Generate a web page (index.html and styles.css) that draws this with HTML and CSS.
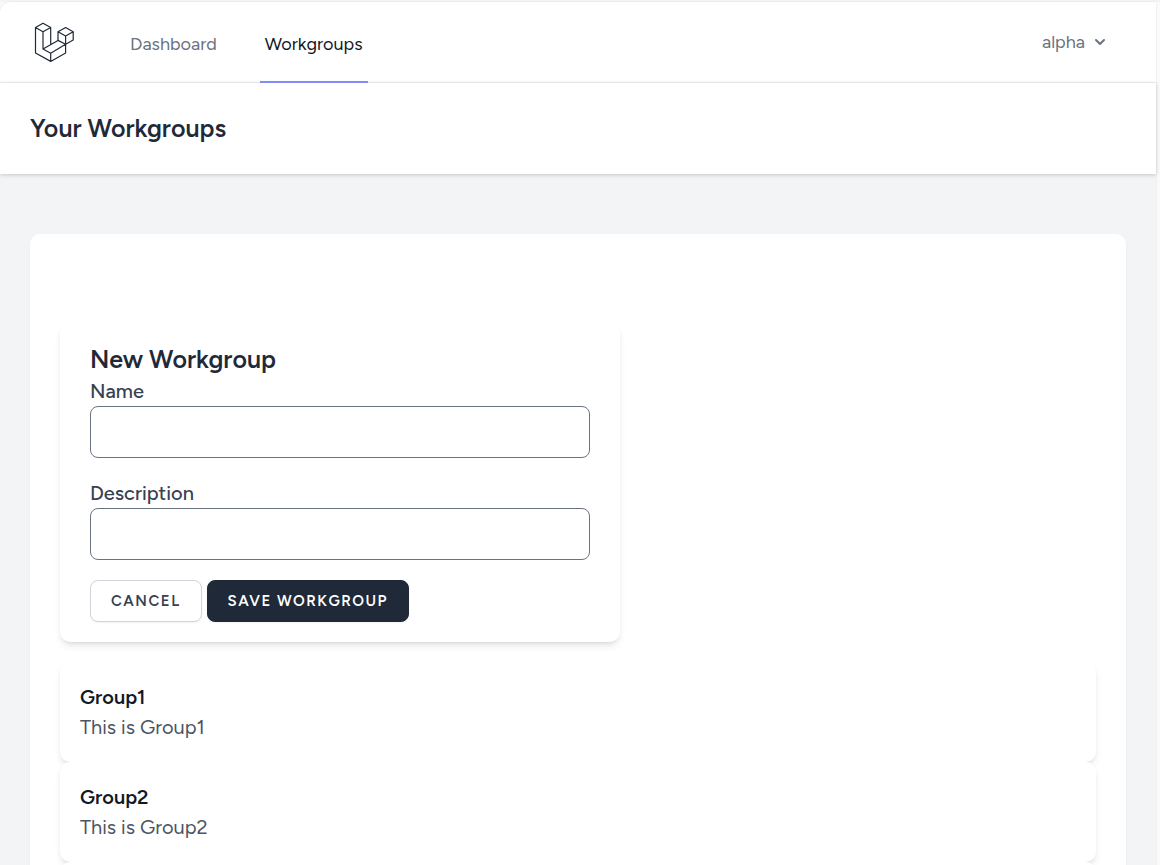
FILE: index.html
```html
<!DOCTYPE html>
<html lang="en">
<head>
<meta charset="utf-8">
<meta name="viewport" content="width=device-width, initial-scale=1">
<title>Workgroups</title>
<link rel="stylesheet" href="styles.css">
</head>
<body>
<div class="frame">
  <div class="app">
    <nav class="nav">
      <a class="logo" href="#" aria-label="Home">
        <svg viewBox="0 0 40 40" width="40" height="40" fill="none" stroke="currentColor" stroke-width="1.2" stroke-linejoin="round" aria-hidden="true">
          <path d="M1.5 5.5 9 1.2 16.7 5.5 9 9.8ZM1.5 5.5V31L16.7 39.4 31.6 31V22.3M9 9.8V27L16.7 31.2V39.4M16.7 5.5V22.5M9 27 24 18.4 31.6 22.3 16.7 31.2"/>
          <path d="M24 9.8 31.6 5.5 39.2 9.8 31.6 14ZM24 9.8V18.4M39.2 9.8V18L31.6 22.3V14"/>
        </svg>
      </a>
      <a class="nav-link" href="#">Dashboard</a>
      <a class="nav-link active" href="#" aria-current="page">Workgroups</a>
      <button class="user" type="button">alpha
        <svg viewBox="0 0 20 20" width="20" height="20" fill="currentColor" aria-hidden="true"><path fill-rule="evenodd" d="M5.293 7.293a1 1 0 011.414 0L10 10.586l3.293-3.293a1 1 0 111.414 1.414l-4 4a1 1 0 01-1.414 0l-4-4a1 1 0 010-1.414z"/></svg>
      </button>
    </nav>
    <header class="header"><h1 class="title">Your Workgroups</h1></header>
    <main class="main">
      <div class="panel">
        <form class="form">
          <h2 class="title form-title">New Workgroup</h2>
          <label class="label" for="name">Name</label>
          <input class="input" id="name" type="text">
          <label class="label" for="description">Description</label>
          <input class="input" id="description" type="text">
          <div class="actions">
            <button class="button" type="button">Cancel</button>
            <button class="button primary" type="submit">Save Workgroup</button>
          </div>
        </form>
        <section class="group"><h3 class="group-name">Group1</h3><p class="group-text">This is Group1</p></section>
        <section class="group"><h3 class="group-name">Group2</h3><p class="group-text">This is Group2</p></section>
        <section class="group"></section>
      </div>
    </main>
  </div>
</div>
</body>
</html>
```
FILE: styles.css
```css
* { box-sizing: border-box; }
html { overflow: hidden; }
body { margin: 0; height: 100vh; overflow: hidden; background: #fafafb; font-family: Figtree, Lato, sans-serif; color: #111827; }
h1, h2, h3, p { margin: 0; }
.frame { padding: 2px 4px 0 0; background: linear-gradient(#f3f4f6 2px, #fafafb 2px); }
.app { min-height: 100vh; background: #f3f4f6; border-radius: 10px 0 0 0; box-shadow: 0 0 2px #0000001f; }
.nav { display: flex; height: 81px; padding: 0 46px 0 34px; background: #fff; border-bottom: 1px solid #f0f0f2; border-radius: 10px 0 0 0; }
.logo { display: flex; align-items: center; margin-right: 51px; color: #1f2937; }
.nav-link { display: flex; align-items: center; height: 81px; margin-right: 38px; padding: 5px 5px 0; border-bottom: 2px solid transparent; color: #6b7280; font-size: 18px; text-decoration: none; }
.active { border-color: #818cf8; color: #111827; }
.user { display: flex; align-items: center; gap: 5px; margin-left: auto; padding: 0; border: 0; background: none; color: #6b7280; font: inherit; font-size: 18px; }
.header { padding: 30px; background: #fff; box-shadow: 0 1px 4px #00000030; }
.title { color: #1f2937; font-size: 25px; font-weight: 600; line-height: 31px; }
.form-title { margin-bottom: 1px; }
.main { padding: 60px 30px; }
.panel { padding: 90px 30px 30px; background: #fff; border-radius: 10px; box-shadow: 0 1px 3px #0000000a; }
.form { max-width: 560px; margin-bottom: 20px; padding: 20px 30px; border-radius: 10px; box-shadow: 0 5px 8px -2px #0000001c, 0 2px 4px -2px #0000001c; }
.label { display: block; color: #374151; font-size: 20px; font-weight: 500; line-height: 30px; }
.input { display: block; width: 100%; height: 52px; margin-bottom: 20px; padding: 0 15px; border: 1px solid #6b7280; border-radius: 8px; background: #fff; font: inherit; font-size: 20px; }
.actions { display: flex; gap: 5px; }
.button { height: 42px; padding: 0 20px; border: 1px solid #d1d5db; border-radius: 8px; background: #fff; color: #374151; font: inherit; font-size: 15px; font-weight: 600; letter-spacing: 0.1em; text-transform: uppercase; box-shadow: 0 1px 2px #0000000d; }
.primary { border-color: #1f2937; background: #1f2937; color: #fff; }
.group { min-height: 100px; padding: 20px; border-radius: 10px; background: #fff; box-shadow: 0 5px 8px -2px #0000001c, 0 2px 4px -2px #0000001c; }
.group-name { font-size: 20px; font-weight: 600; line-height: 30px; }
.group-text { color: #4b5563; font-size: 20px; line-height: 30px; }
```
